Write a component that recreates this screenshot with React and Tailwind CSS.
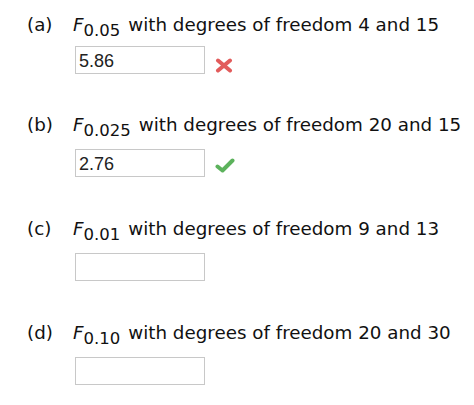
import React from 'react';

const rows = [
  { label: '(a)', sub: '0.05', df: '4 and 15', value: '5.86', status: 'wrong', mt: 'mt-[13px]', inputMt: 'mt-[9px]' },
  { label: '(b)', sub: '0.025', df: '20 and 15', value: '2.76', status: 'right', mt: 'mt-[39px]', inputMt: 'mt-[12px]' },
  { label: '(c)', sub: '0.01', df: '9 and 13', value: '', status: null, mt: 'mt-[40px]', inputMt: 'mt-[12px]' },
  { label: '(d)', sub: '0.10', df: '20 and 30', value: '', status: null, mt: 'mt-[40px]', inputMt: 'mt-[12px]' },
];

const WrongIcon = () => (
  <svg width="18" height="15" viewBox="0 0 18 15" className="ml-[10px] mb-[1px] self-end">
    <path d="M3 2.5 L15 12.5 M15 2.5 L3 12.5" stroke="#e25b5b" strokeWidth="4" strokeLinecap="round" />
  </svg>
);

const RightIcon = () => (
  <svg width="20" height="15" viewBox="0 0 20 15" className="ml-[10px] mb-[4px] self-end">
    <path d="M2.5 8.5 L7.5 12.5 L17.5 2.5" stroke="#5cb25c" strokeWidth="4" strokeLinecap="round" strokeLinejoin="round" fill="none" />
  </svg>
);

const App = () => {
  return (
    <div className="min-h-screen bg-white pl-[27px] text-[#111]" style={{ fontFamily: '"DejaVu Sans", Verdana, sans-serif' }}>
      {rows.map((row) => (
        <div key={row.label} className={row.mt}>
          <div className="flex h-[24px] text-[18.3px] leading-[24px] whitespace-nowrap">
            <span className="w-[46px] shrink-0">{row.label}</span>
            <span>
              <i>F</i>
              <span className="text-[16.5px] leading-none align-[-5px]">{row.sub}</span>
              <span className="ml-[8px]">with degrees of freedom {row.df}</span>
            </span>
          </div>
          <div className={`flex ${row.inputMt} ml-[48px]`}>
            <input
              type="text"
              defaultValue={row.value}
              className="h-[28px] w-[130px] border border-[#c8c8c8] bg-white pl-[3px] pt-[2px] text-[18px] text-[#222] outline-none"
              style={{ fontFamily: '"Liberation Sans", Arial, sans-serif' }}
            />
            {row.status === 'wrong' && <WrongIcon />}
            {row.status === 'right' && <RightIcon />}
          </div>
        </div>
      ))}
    </div>
  );
};

export default App;
